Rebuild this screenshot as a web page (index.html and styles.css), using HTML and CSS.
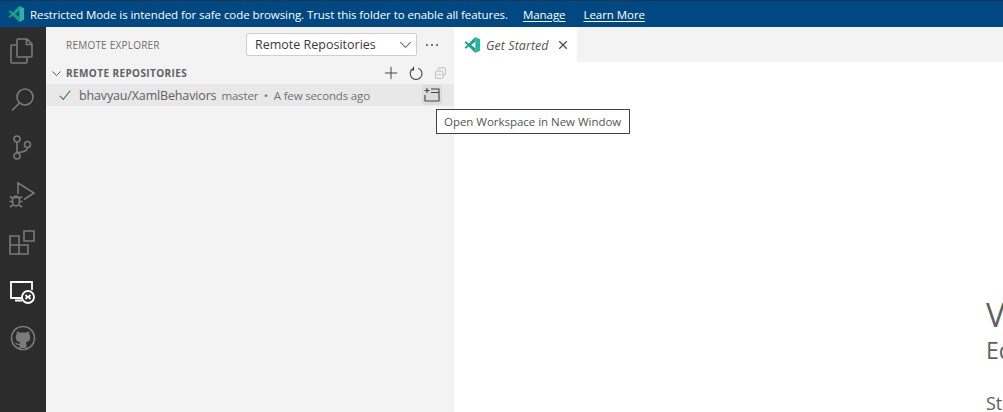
FILE: index.html
```html
<!DOCTYPE html>
<html lang="en">
<head>
<meta charset="utf-8">
<title>Get Started</title>
<link rel="stylesheet" href="styles.css">
</head>
<body>
<div class="banner">
  <svg class="banner-logo" viewBox="0 0 18 18"><path d="M12 .5 17 3v12l-5 2.500z" fill="#2bb59f"/><path d="M12 .5 5 7.500 2 5 .5 6 3.500 9 .5 12 2 13l3-2.500 7 7v-5L7.500 9 12 5.500z" fill="#1aa388"/></svg>
  <span class="banner-msg">Restricted Mode is intended for safe code browsing. Trust this folder to enable all features.</span>
  <a class="banner-link manage">Manage</a>
  <a class="banner-link">Learn More</a>
</div>
<div class="main">
  <nav class="activity">
    <svg class="act" viewBox="0 0 28 28"><path d="M9 3h9l5 5v12a1 1 0 0 1-1 1H9a1 1 0 0 1-1-1V4a1 1 0 0 1 1-1zM17.500 3v5.500H23M8 9H3a1 1 0 0 0-1 1v16a1 1 0 0 0 1 1h14a1 1 0 0 0 1-1v-5"/></svg>
    <svg class="act" viewBox="0 0 28 28"><circle cx="16" cy="13" r="8"/><path d="M10.500 19 3 26.500"/></svg>
    <svg class="act" viewBox="0 0 28 28"><circle cx="8" cy="7" r="3"/><circle cx="8" cy="24" r="3"/><circle cx="18.500" cy="12.500" r="3"/><path d="M8 10v11M18.500 15.500c0 3-3 4-5.500 4.500s-5 .5-5 .5"/></svg>
    <svg class="act" viewBox="0 0 28 28"><path d="M9 14V3l16 10-10 6.500"/><ellipse cx="7" cy="21" rx="3.500" ry="5"/><path d="M1 16.500l3 2M13 16.500l-3 2M.5 21.500h3M10.500 21.500h3M1 27l3-2M13 27l-3-2M4 17.500h6"/></svg>
    <svg class="act" viewBox="0 0 28 28"><path d="M1 8h9v18H1zM1 17h18v9H10M15 3h10v10H15z"/></svg>
    <svg class="act current" viewBox="0 0 28 28"><path d="M13 22H2V6h21v8M6 24.500h7"/><circle cx="19" cy="21" r="6"/><path d="M16.500 19l2 2-2 2M21.500 19l-2 2 2 2"/></svg>
    <svg class="act gh" viewBox="0 0 28 28"><circle cx="14" cy="14" r="11.500"/><path d="M10.500 24v-3c-2.500.5-3.500-.5-4.500-2.500 1.500 0 2 1.500 4.500 1.500 0-.8.3-1.300.8-1.700-2.800-.5-4.600-2-4.600-5 0-1.300.4-2.300 1-3-.2-.9-.1-1.800.3-2.800 1.300 0 2.300.7 3 1.300 1.400-.4 4.600-.4 6 0 .7-.6 1.700-1.300 3-1.300.4 1 .5 1.900.3 2.800.6.700 1 1.700 1 3 0 3-1.800 4.500-4.600 5 .5.400.8 1 .8 2V24z"/></svg>
  </nav>
  <aside class="sidebar">
    <div class="side-head">
      <span class="side-title">REMOTE EXPLORER</span>
      <div class="picker"><span>Remote Repositories</span>
        <svg class="chev" viewBox="0 0 16 16"><path d="M2.500 5.500 8 11l5.500-5.500"/></svg>
      </div>
      <span class="more"><i></i><i></i><i></i></span>
    </div>
    <div class="section">
      <svg class="sec-chev" viewBox="0 0 16 16"><path d="M3 5.500 8 10.500l5-5"/></svg>
      <span class="sec-title">REMOTE REPOSITORIES</span>
      <svg class="tool plus" viewBox="0 0 16 16"><path d="M8 1v14M1 8h14"/></svg>
      <svg class="tool refresh" viewBox="0 0 16 16"><path d="M4.500 2.600A6.300 6.300 0 1 0 10 2.300M4.800 .8v3.400H1.500"/></svg>
      <svg class="tool dim" viewBox="0 0 16 16"><path d="M5 4V2.500A1.500 1.500 0 0 1 6.500 1h6A1.500 1.500 0 0 1 14 2.500v6a1.500 1.500 0 0 1-1.500 1.500H11M2 6.500A1.500 1.500 0 0 1 3.500 5h6A1.500 1.500 0 0 1 11 6.500v6A1.500 1.500 0 0 1 9.500 14h-6A1.500 1.500 0 0 1 2 12.500zM4.500 9.500h4"/></svg>
    </div>
    <div class="repo">
      <svg class="check" viewBox="0 0 16 16"><path d="M2 9l4 4L14 3"/></svg>
      <span class="repo-name">bhavyau/XamlBehaviors</span>
      <span class="repo-meta">master&nbsp; •&nbsp; A few seconds ago</span>
      <span class="repo-action">
        <svg viewBox="0 0 16 16"><path d="M.5 3.500h5M3 1v5M7 2h8v12H1V8M7 5.500h8"/></svg>
      </span>
    </div>
  </aside>
  <section class="editor">
    <div class="tabs">
      <div class="tab">
        <svg class="tab-logo" viewBox="0 0 18 18"><path d="M12 .5 17 3v12l-5 2.500z" fill="#2bb59f"/><path d="M12 .5 5 7.500 2 5 .5 6 3.500 9 .5 12 2 13l3-2.500 7 7v-5L7.500 9 12 5.500z" fill="#1aa388"/></svg>
        <em>Get Started</em>
        <svg class="tab-close" viewBox="0 0 12 12"><path d="M1.500 1.500l9 9M10.500 1.500l-9 9"/></svg>
      </div>
    </div>
    <div class="welcome">
      <h1>Visual Studio Code</h1>
      <h2>Editing evolved</h2>
      <h3>Start</h3>
    </div>
  </section>
</div>
<div class="tooltip">Open Workspace in New Window</div>
</body>
</html>
```
FILE: styles.css
```css
* { box-sizing: border-box; }
html, body { margin: 0; height: 100%; overflow: hidden; }
body {
  display: flex;
  flex-direction: column;
  width: 1003px;
  height: 412px;
  font-family: "Open Sans", "Noto Sans", sans-serif;
  color: #616161;
  background: #fff;
}
.banner {
  height: 27px;
  flex: none;
  display: flex;
  align-items: center;
  border-top: 1px solid #1c3552;
  background: #004882;
  color: #fff;
  font-size: 11.5px;
  white-space: nowrap;
}
.banner-logo { width: 17px; height: 18px; margin-left: 7.500px; margin-right: 5.500px; flex: none; }
.banner-msg { letter-spacing: -0.075px; }
.banner-link { text-decoration: underline; text-underline-offset: 2px; letter-spacing: -0.05px; margin-left: 18px; }
.banner-link.manage { margin-left: 15px; }
.main { flex: 1; display: flex; min-height: 0; }
.activity {
  width: 46px;
  flex: none;
  background: #2c2c2c;
  display: flex;
  flex-direction: column;
  align-items: center;
  padding-top: 9px;
  gap: 20px;
}
.act {
  width: 28px;
  height: 28px;
  flex: none;
  fill: none;
  stroke: #7a7a7a;
  stroke-width: 1.600;
}
.act.current { stroke: #fff; stroke-width: 1.800; }
.act.gh path { fill: #7a7a7a; stroke: none; }
.sidebar {
  width: 408px;
  flex: none;
  background: #f3f3f3;
  display: flex;
  flex-direction: column;
}
.side-head { height: 35px; display: flex; align-items: center; padding-left: 20px; }
.side-title { font-size: 10px; width: 180px; letter-spacing: 0.22px; color: #6f6f6f; }
.picker {
  width: 171px;
  height: 23px;
  background: #fff;
  border: 1px solid #cecece;
  border-radius: 2px;
  display: flex;
  align-items: center;
  justify-content: space-between;
  padding: 0 3px 0 8px;
  font-size: 12.500px;
  color: #3b3b3b;
  letter-spacing: 0;
  white-space: nowrap;
}
.chev { width: 15px; height: 15px; fill: none; stroke: #777; stroke-width: 1.300; }
.more { display: flex; gap: 3px; margin-left: 8.500px; }
.more i { width: 2px; height: 2px; background: #555; border-radius: 50%; }
.section { height: 22px; display: flex; align-items: center; padding-left: 4px; }
.sec-chev { width: 13px; height: 13px; fill: none; stroke: #555; stroke-width: 1.200; margin-right: 3px; }
.sec-title { font-size: 10px; font-weight: 700; letter-spacing: 0.4px; color: #616161; flex: 1; }
.tool { width: 14px; height: 14px; fill: none; stroke: #424242; stroke-width: 1.100; margin-right: 11px; }
.tool.refresh { width: 15px; height: 15px; margin-right: 10px; stroke-width: 1.200; }
.tool.dim { stroke: #b4b4b4; width: 13px; height: 13px; margin-right: 7px; }
.repo {
  height: 22px;
  display: flex;
  align-items: center;
  background: #e8e8e8;
  padding-left: 12px;
  white-space: nowrap;
}
.check { width: 14px; height: 14px; fill: none; stroke: #388a34; stroke-width: 1.200; flex: none; margin-right: 7px; }
.repo-name { font-size: 12.500px; letter-spacing: -0.15px; color: #616161; margin-right: 5px; }
.repo-meta { font-size: 11.500px; letter-spacing: -0.16px; color: #717171; flex: 1; }
.repo-action {
  width: 20px;
  height: 20px;
  margin-right: 12px;
  display: flex;
  align-items: center;
  justify-content: center;
  background: #dcdcdc;
  border-radius: 4px;
}
.repo-action svg { width: 16px; height: 16px; fill: none; stroke: #424242; stroke-width: 1.100; }
.editor { flex: 1; min-width: 0; display: flex; flex-direction: column; overflow: hidden; }
.tabs { height: 35px; flex: none; background: #f3f3f3; display: flex; }
.tab {
  width: 123px;
  background: #fff;
  display: flex;
  align-items: center;
  padding: 1px 0 0 10px;
  font-size: 12.500px;
  color: #555;
  white-space: nowrap;
}
.tab-logo { width: 17px; height: 18px; margin-right: 5px; flex: none; }
.tab em { letter-spacing: 0.05px; }
.tab-close { width: 10px; height: 10px; margin-left: 9px; fill: none; stroke: #444; stroke-width: 1.300; flex: none; }
.welcome { padding: 231px 0 0 532px; white-space: nowrap; color: #616161; }
.welcome h1 { margin: 0; font-size: 32px; line-height: 44px; font-weight: 400; }
.welcome h2 { margin: -2px 0 0; font-size: 23px; line-height: 31px; font-weight: 400; }
.welcome h3 { margin: 25px 0 0; font-size: 18px; line-height: 24px; font-weight: 400; }
.tooltip {
  position: absolute;
  left: 436px;
  top: 109px;
  width: 194px;
  height: 25px;
  background: #fff;
  border: 1px solid #424242;
  font-size: 11.500px;
  line-height: 24px;
  padding-left: 7px;
  color: #555;
  letter-spacing: -0.03px;
  white-space: nowrap;
}
```
